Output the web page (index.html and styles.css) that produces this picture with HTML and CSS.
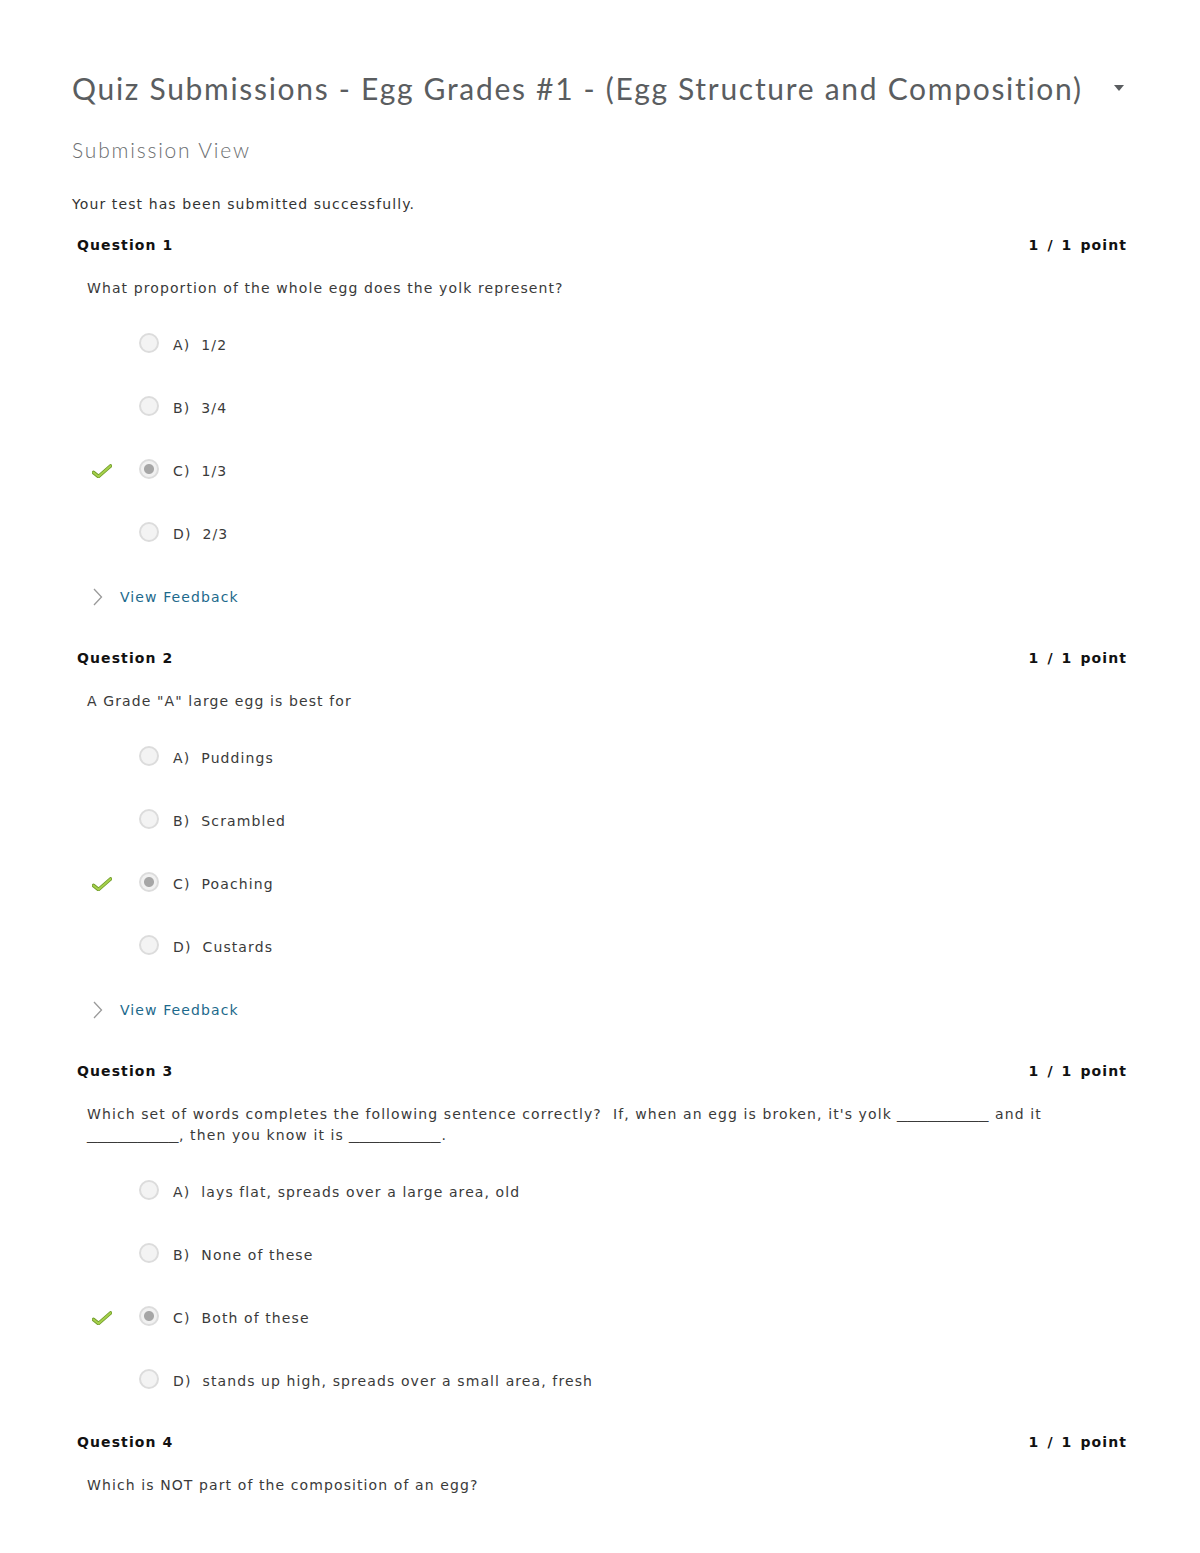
FILE: index.html
```html
<!DOCTYPE html>
<html>
<head>
<meta charset="utf-8">
<title>Quiz Submissions</title>
<link rel="stylesheet" href="styles.css">
</head>
<body>
<div class="page">
  <div class="title-row">
    <h1 class="title">Quiz Submissions - Egg Grades #1 - (Egg Structure and Composition)</h1>
    <span class="caret"></span>
  </div>
  <h2 class="subtitle">Submission View</h2>
  <p class="success">Your test has been submitted successfully.</p>

  <div class="question">
    <div class="q-head"><span>Question 1</span><span class="pts">1 / 1 point</span></div>
    <div class="q-text">What proportion of the whole egg does the yolk represent?</div>
    <div class="options">
      <div class="opt"><span class="mark"></span><span class="radio"></span><span class="label">A)&nbsp; 1/2</span></div>
      <div class="opt"><span class="mark"></span><span class="radio"></span><span class="label">B)&nbsp; 3/4</span></div>
      <div class="opt"><span class="mark"><svg width="20" height="14" viewBox="0 0 20 14"><path d="M1.5 8.5 L6.5 12.5 L18.5 2" fill="none" stroke="#6f9a2a" stroke-width="3.6" stroke-linecap="round" stroke-linejoin="round"/><path d="M1.5 8.5 L6.5 12.5 L18.5 2" fill="none" stroke="#a5d04b" stroke-width="2" stroke-linecap="round" stroke-linejoin="round"/></svg></span><span class="radio checked"></span><span class="label">C)&nbsp; 1/3</span></div>
      <div class="opt"><span class="mark"></span><span class="radio"></span><span class="label">D)&nbsp; 2/3</span></div>
      <div class="opt feedback"><span class="chev"><svg width="12" height="20" viewBox="0 0 12 20"><path d="M2 2 L9.5 10 L2 18" fill="none" stroke="#9a9a9a" stroke-width="1.3"/></svg></span><a class="fb-link">View Feedback</a></div>
    </div>
  </div>

  <div class="question">
    <div class="q-head"><span>Question 2</span><span class="pts">1 / 1 point</span></div>
    <div class="q-text">A Grade "A" large egg is best for</div>
    <div class="options">
      <div class="opt"><span class="mark"></span><span class="radio"></span><span class="label">A)&nbsp; Puddings</span></div>
      <div class="opt"><span class="mark"></span><span class="radio"></span><span class="label">B)&nbsp; Scrambled</span></div>
      <div class="opt"><span class="mark"><svg width="20" height="14" viewBox="0 0 20 14"><path d="M1.5 8.5 L6.5 12.5 L18.5 2" fill="none" stroke="#6f9a2a" stroke-width="3.6" stroke-linecap="round" stroke-linejoin="round"/><path d="M1.5 8.5 L6.5 12.5 L18.5 2" fill="none" stroke="#a5d04b" stroke-width="2" stroke-linecap="round" stroke-linejoin="round"/></svg></span><span class="radio checked"></span><span class="label">C)&nbsp; Poaching</span></div>
      <div class="opt"><span class="mark"></span><span class="radio"></span><span class="label">D)&nbsp; Custards</span></div>
      <div class="opt feedback"><span class="chev"><svg width="12" height="20" viewBox="0 0 12 20"><path d="M2 2 L9.5 10 L2 18" fill="none" stroke="#9a9a9a" stroke-width="1.3"/></svg></span><a class="fb-link">View Feedback</a></div>
    </div>
  </div>

  <div class="question">
    <div class="q-head"><span>Question 3</span><span class="pts">1 / 1 point</span></div>
    <div class="q-text">Which set of words completes the following sentence correctly?&nbsp; If, when an egg is broken, it's yolk <span class="blank">_________</span> and it <span class="blank">_________</span>, then you know it is <span class="blank">_________</span>.</div>
    <div class="options">
      <div class="opt"><span class="mark"></span><span class="radio"></span><span class="label">A)&nbsp; lays flat, spreads over a large area, old</span></div>
      <div class="opt"><span class="mark"></span><span class="radio"></span><span class="label">B)&nbsp; None of these</span></div>
      <div class="opt"><span class="mark"><svg width="20" height="14" viewBox="0 0 20 14"><path d="M1.5 8.5 L6.5 12.5 L18.5 2" fill="none" stroke="#6f9a2a" stroke-width="3.6" stroke-linecap="round" stroke-linejoin="round"/><path d="M1.5 8.5 L6.5 12.5 L18.5 2" fill="none" stroke="#a5d04b" stroke-width="2" stroke-linecap="round" stroke-linejoin="round"/></svg></span><span class="radio checked"></span><span class="label">C)&nbsp; Both of these</span></div>
      <div class="opt"><span class="mark"></span><span class="radio"></span><span class="label">D)&nbsp; stands up high, spreads over a small area, fresh</span></div>
    </div>
  </div>

  <div class="question">
    <div class="q-head"><span>Question 4</span><span class="pts">1 / 1 point</span></div>
    <div class="q-text">Which is NOT part of the composition of an egg?</div>
  </div>
</div>
</body>
</html>
```

FILE: styles.css
```css
html, body {
  margin: 0;
  padding: 0;
  background: #ffffff;
}
.page {
  width: 1054px;
  padding: 68px 0 0 72px;
  font-family: "DejaVu Sans", Verdana, sans-serif;
  font-size: 14px;
  letter-spacing: 1.1px;
  color: #3a3a3a;
}
.title-row {
  display: flex;
  align-items: center;
  justify-content: space-between;
  height: 40px;
}
.title {
  margin: 0;
  font-family: "Lato", "DejaVu Sans", sans-serif;
  font-weight: normal;
  font-size: 30px;
  line-height: 40px;
  color: #5a5d60;
  letter-spacing: 1.7px;
  white-space: nowrap;
}
.caret {
  width: 0;
  height: 0;
  border-left: 5px solid transparent;
  border-right: 5px solid transparent;
  border-top: 6px solid #5a5d60;
  margin-right: 2px;
}
.subtitle {
  margin: 28px 0 0 0;
  font-family: "Lato", "DejaVu Sans", sans-serif;
  font-weight: 300;
  font-size: 21px;
  line-height: 28px;
  letter-spacing: 1.8px;
  color: #6b6e70;
}
.success {
  margin: 30px 0 0 0;
  line-height: 20px;
  color: #333333;
}
.question {
  margin-top: 21px;
}
.question + .question {
  margin-top: 19.5px;
}
.q-head {
  display: flex;
  justify-content: space-between;
  padding-left: 5px;
  line-height: 20px;
  font-weight: bold;
  color: #111111;
}
.pts {
  word-spacing: 2px;
  margin-right: -1px;
}
.q-text {
  margin-top: 22.5px;
  padding-left: 15px;
  padding-right: 70px;
  line-height: 21px;
  color: #3a3a3a;
}
.blank {
  display: inline-block;
  letter-spacing: 0;
  transform: scaleX(1.45);
  transform-origin: left center;
  margin-right: 29px;
}
.options {
  margin-top: 15px;
  display: flex;
  flex-direction: column;
}
.opt {
  height: 63px;
  display: flex;
  align-items: center;
}
.mark {
  width: 20px;
  margin-left: 20px;
  margin-right: 27px;
  display: flex;
  align-items: center;
}
.radio {
  width: 16px;
  height: 16px;
  border-radius: 50%;
  border: 2px solid #dcdcdc;
  background: #f3f3f3;
  box-sizing: content-box;
  margin-right: 14px;
  position: relative;
  top: -2px;
}
.radio.checked {
  background: radial-gradient(circle, #a6a6a6 0, #a6a6a6 4.5px, #f1f1f1 5.5px);
}
.label {
  color: #3a3a3a;
}
.chev {
  width: 12px;
  margin-left: 20px;
  margin-right: 16px;
  display: flex;
  align-items: center;
}
.fb-link {
  color: #1d6a8c;
}
```
